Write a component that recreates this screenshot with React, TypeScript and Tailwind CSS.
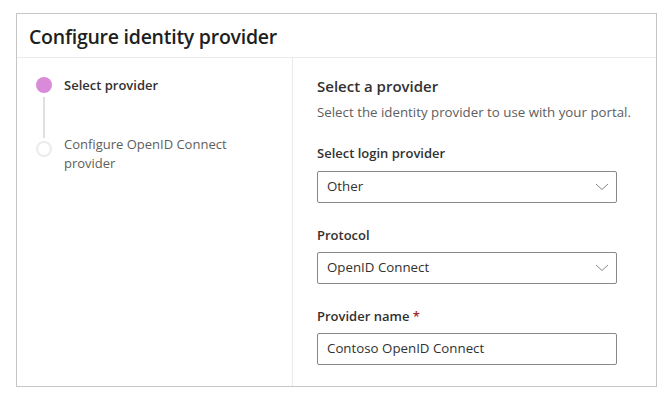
import React from "react";

const Chevron = () => (
  <svg width="14" height="8" viewBox="0 0 14 8" fill="none">
    <path d="M1 1 L7 6.5 L13 1" stroke="#8a8886" strokeWidth="1" />
  </svg>
);

export default function App() {
  return (
    <div
      className="w-[671px] h-[402px] bg-white pl-[16px] pt-[13px]"
      style={{ fontFamily: '"Open Sans", "Noto Sans", sans-serif' }}
    >
      <div className="w-[641px] h-[374px] border border-[#c8c6c4] flex flex-col">
        <div className="h-[44px] border-b border-[#edebe9] flex items-center pl-[12px] pt-[2px]">
          <h1 className="text-[19.5px] text-[#201f1e] font-semibold tracking-[-0.25px] leading-none">
            Configure identity provider
          </h1>
        </div>
        <div className="flex flex-1">
          <div className="w-[276px] border-r border-[#edebe9] pl-[19px] pt-[19px]">
            <div className="flex">
              <div className="flex flex-col items-center w-[16px]">
                <div className="w-[16px] h-[16px] rounded-full bg-[#d98ad9]" />
                <div className="w-[2px] h-[41px] bg-[#e1dfdd] mt-[4px]" />
                <div className="w-[16px] h-[16px] rounded-full border-2 border-[#edebe9] mt-[3px]" />
              </div>
              <div className="ml-[12px] flex flex-col">
                <div className="text-[13px] leading-[16px] font-semibold text-[#323130]">
                  Select provider
                </div>
                <div className="text-[13px] leading-[19px] text-[#605e5c] mt-[42px] w-[190px]">
                  Configure OpenID Connect provider
                </div>
              </div>
            </div>
          </div>
          <div className="flex-1 pl-[24px] pt-[18px]">
            <div className="text-[15px] leading-[20px] font-semibold text-[#323130]">
              Select a provider
            </div>
            <div className="text-[13.3px] leading-[18px] text-[#605e5c] mt-[7px]">
              Select the identity provider to use with your portal.
            </div>
            <div className="text-[13px] leading-[18px] font-semibold text-[#323130] mt-[23px]">
              Select login provider
            </div>
            <div className="mt-[9px] w-[300px] h-[32px] border border-[#8a8886] rounded-[2px] flex items-center justify-between pl-[9px] pr-[7px]">
              <span className="text-[13.3px] text-[#323130]">Other</span>
              <Chevron />
            </div>
            <div className="text-[13px] leading-[18px] font-semibold text-[#323130] mt-[23px]">
              Protocol
            </div>
            <div className="mt-[8px] w-[300px] h-[32px] border border-[#8a8886] rounded-[2px] flex items-center justify-between pl-[9px] pr-[7px]">
              <span className="text-[13.3px] text-[#323130]">OpenID Connect</span>
              <Chevron />
            </div>
            <div className="text-[13px] leading-[18px] font-semibold text-[#323130] mt-[23px]">
              Provider name <span className="text-[#a4262c]">*</span>
            </div>
            <div className="mt-[8px] w-[300px] h-[32px] border border-[#8a8886] rounded-[2px] flex items-center pl-[9px]">
              <span className="text-[13.3px] text-[#323130]">Contoso OpenID Connect</span>
            </div>
          </div>
        </div>
      </div>
    </div>
  );
}
